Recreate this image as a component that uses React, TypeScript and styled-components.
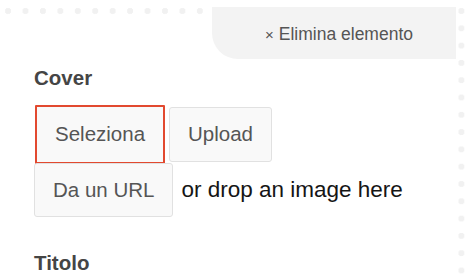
import React from 'react';
import styled, {createGlobalStyle} from "styled-components";

const GlobalStyle = createGlobalStyle`
  html, body {
    margin: 0;
    padding: 0;
    background: #ffffff;
  }
  body {
    font-family: "Liberation Sans", Arial, sans-serif;
  }
`

// faint dotted frame behind the card (top row + right column)
const Page = styled.div`
  width: 474px;
  height: 274px;
  overflow: hidden;
  display: flex;
  flex-direction: column;
  background-color: #ffffff;
  background-image: radial-gradient(circle, #f1f1f1 2.8px, rgba(241, 241, 241, 0) 3.4px);
  background-size: 17.45px 17.3px;
  background-position: -0.7px 2.35px;
`

const Card = styled.div`
  flex: 1;
  margin-top: 17px;
  margin-right: 18px;
  background: #ffffff;
  display: flex;
  flex-direction: column;
`

const Toolbar = styled.div`
  display: flex;
  justify-content: flex-end;
  margin-top: -10px;
`

const DeleteTab = styled.button`
  width: 244px;
  height: 52px;
  border: none;
  background: #f3f3f3;
  border-bottom-left-radius: 26px;
  display: flex;
  align-items: center;
  justify-content: flex-end;
  padding: 3px 43px 0 0;
  font-family: "Liberation Sans", Arial, sans-serif;
  font-size: 17.5px;
  color: #555555;
  cursor: pointer;
`

const Times = styled.span`
  font-size: 15px;
  margin-right: 5px;
`

const Body = styled.div`
  padding-left: 34px;
  display: flex;
  flex-direction: column;
`

const Label = styled.div<{ $top: number }>`
  margin-top: ${p => p.$top}px;
  font-size: 20.5px;
  font-weight: bold;
  color: #454545;
  line-height: 1.15;
`

const ButtonRow = styled.div<{ $top: number }>`
  display: flex;
  align-items: center;
  gap: 4px;
  margin-top: ${p => p.$top}px;
`

const SourceButton = styled.button<{ $active?: boolean; $height?: number }>`
  height: ${p => p.$active ? 59 : (p.$height || 55)}px;
  margin-left: ${p => p.$active ? 1 : 0}px;
  padding: 0 18px;
  border: ${p => p.$active ? "2px solid #e2492f" : "1px solid #e1e1e1"};
  border-radius: ${p => p.$active ? 1 : 3}px;
  background: #f9f9f9;
  font-family: "Liberation Sans", Arial, sans-serif;
  font-size: 20.5px;
  color: #555555;
  display: inline-flex;
  align-items: center;
  cursor: pointer;
`

const DropHint = styled.span`
  margin-left: 4px;
  font-size: 22.5px;
  color: #151515;
`

const App = () => {
    return (
        <>
            <GlobalStyle/>
            <Page>
                <Card>
                    <Toolbar>
                        <DeleteTab><Times>×</Times>Elimina elemento</DeleteTab>
                    </Toolbar>
                    <Body>
                        <Label $top={7}>Cover</Label>
                        <ButtonRow $top={15}>
                            <SourceButton $active>Seleziona</SourceButton>
                            <SourceButton>Upload</SourceButton>
                        </ButtonRow>
                        <ButtonRow $top={-1}>
                            <SourceButton $height={54}>Da un URL</SourceButton>
                            <DropHint>or drop an image here</DropHint>
                        </ButtonRow>
                        <Label $top={34}>Titolo</Label>
                    </Body>
                </Card>
            </Page>
        </>
    );
}

export default App;
